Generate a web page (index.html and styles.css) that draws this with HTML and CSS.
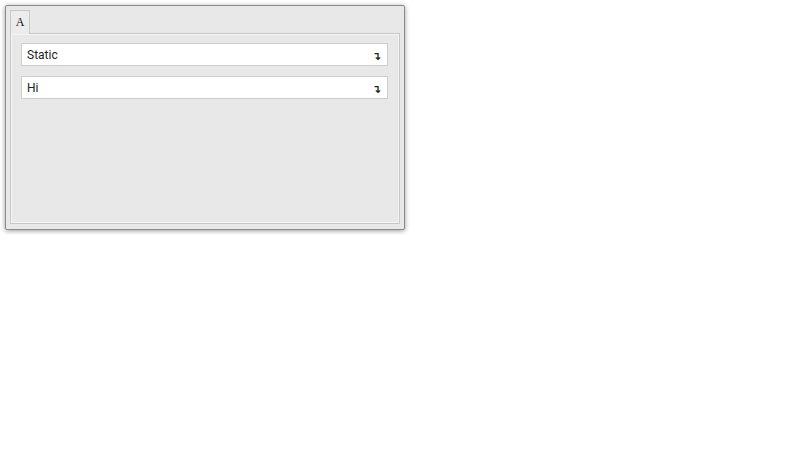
FILE: index.html
```html
<!DOCTYPE html>
<html>
<head>
<meta charset="utf-8">
<link rel="stylesheet" href="styles.css">
</head>
<body>
<div class="window">
  <div class="tabs">
    <div class="tab">A</div>
  </div>
  <div class="panel">
    <div class="select"><span>Static</span><span class="arrow">↴</span></div>
    <div class="select"><span>Hi</span><span class="arrow">↴</span></div>
  </div>
</div>
</body>
</html>
```
FILE: styles.css
```css
html, body {
  margin: 0;
  padding: 0;
  background: #fff;
}
.window {
  margin: 5px;
  box-sizing: border-box;
  width: 400px;
  height: 225px;
  border: 1px solid #8a8a8a;
  border-radius: 2px;
  background: #e8e8e8;
  box-shadow: 0 1px 5px rgba(0,0,0,0.4);
  padding: 4px 4px 5px 4px;
  display: flex;
  flex-direction: column;
}
.tabs {
  display: flex;
}
.tab {
  width: 20px;
  height: 24px;
  box-sizing: border-box;
  border: 1px solid #c8c8c8;
  border-bottom: none;
  background: #ececec;
  font-family: "Liberation Serif", serif;
  font-size: 12px;
  color: #111;
  display: flex;
  justify-content: center;
  padding-top: 4px;
  margin-bottom: -1px;
  position: relative;
  z-index: 1;
}
.panel {
  flex: 1;
  border: 1px solid #c8c8c8;
  box-shadow: inset 1px 1px 0 #f4f4f4, inset -1px -1px 0 #f4f4f4;
  padding: 9px 11px 0 10px;
  display: flex;
  flex-direction: column;
  gap: 10px;
}
.select {
  height: 23px;
  box-sizing: border-box;
  background: #fff;
  border: 1px solid #cdcdcd;
  display: flex;
  align-items: center;
  justify-content: space-between;
  padding: 0 6px 0 5px;
  font-family: Roboto, "Liberation Sans", sans-serif;
  font-size: 12px;
  color: #222;
}
.arrow {
  font-family: "DejaVu Sans", sans-serif;
  font-size: 11px;
  color: #222;
  font-weight: bold;
  padding-top: 3px;
}
```
